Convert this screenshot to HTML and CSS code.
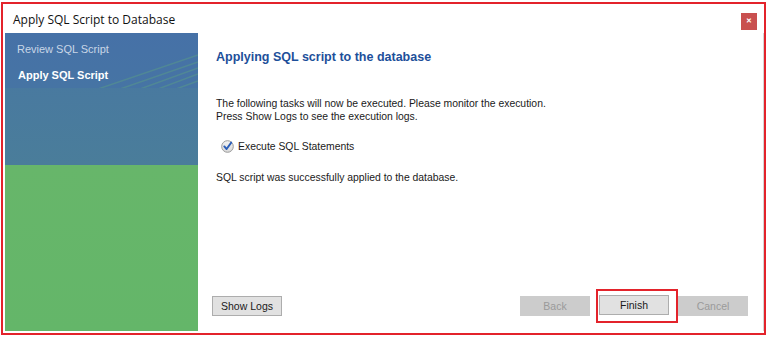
FILE: index.html
```html
<!DOCTYPE html>
<html>
<head>
<meta charset="utf-8">
<link rel="stylesheet" href="styles.css">
</head>
<body>
<div class="frame">
  <div class="titlebar">
    <span class="title">Apply SQL Script to Database</span>
    <span class="close">&#x2715;</span>
  </div>
  <div class="main">
    <aside class="sidebar">
      <div class="nav">
        <div class="nav-head">
          <svg class="deco" width="100" height="36" viewBox="0 0 100 36">
            <g stroke="#5a9c88" stroke-width="1.5" fill="none" opacity="0.5">
              <path d="M0 36 L100 2"/>
              <path d="M22 36 L100 9"/>
              <path d="M42 36 L100 15"/>
              <path d="M60 36 L100 21"/>
              <path d="M78 36 L100 28"/>
            </g>
          </svg>
          <div class="step">Review SQL Script</div>
          <div class="step active">Apply SQL Script</div>
        </div>
      </div>
      <div class="green"></div>
    </aside>
    <section class="content">
      <h1 class="heading">Applying SQL script to the database</h1>
      <p class="info">The following tasks will now be executed. Please monitor the execution.<br>Press Show Logs to see the execution logs.</p>
      <div class="task">
        <svg class="check" width="13" height="13" viewBox="0 0 13 13">
          <defs>
            <linearGradient id="cb" x1="0" y1="0" x2="0" y2="1">
              <stop offset="0" stop-color="#f4f4f4"/>
              <stop offset="1" stop-color="#d8d8d8"/>
            </linearGradient>
          </defs>
          <circle cx="6.5" cy="6.5" r="5.8" fill="url(#cb)" stroke="#9a9a9a" stroke-width="1"/>
          <path d="M3.3 6.4 L5.6 9 L10.2 2.6" stroke="#2a5db8" stroke-width="1.9" fill="none" stroke-linecap="round" stroke-linejoin="round"/>
        </svg>
        <span>Execute SQL Statements</span>
      </div>
      <p class="info success">SQL script was successfully applied to the database.</p>
      <div class="footer">
        <button class="btn">Show Logs</button>
        <div class="spacer"></div>
        <button class="btn disabled back">Back</button>
        <div class="highlight"><button class="btn">Finish</button></div>
        <button class="btn disabled">Cancel</button>
      </div>
    </section>
  </div>
</div>
</body>
</html>
```
FILE: styles.css
```css
html, body {
  margin: 0;
  padding: 0;
  background: #ffffff;
}
body {
  font-family: "Liberation Sans", Arial, sans-serif;
  font-size: 11px;
  color: #1a1a1a;
}
.frame {
  box-sizing: border-box;
  margin: 2px 0 0 1px;
  width: 765px;
  height: 333px;
  border: 2px solid #e3232b;
  display: flex;
  flex-direction: column;
  background: #fff;
}
.titlebar {
  height: 29px;
  flex: none;
  display: flex;
  align-items: center;
  justify-content: space-between;
  padding: 0 7px 0 10px;
}
.title {
  font-family: "Open Sans", "Noto Sans", sans-serif;
  font-size: 12px;
  color: #111;
  margin-top: 2px;
}
.close {
  width: 16px;
  height: 17px;
  background: #c9504f;
  color: #fff;
  font-size: 7px;
  font-weight: bold;
  display: flex;
  align-items: center;
  justify-content: center;
  margin-top: 5px;
}
.main {
  flex: 1;
  display: flex;
  padding: 0 0 2px 2px;
  min-height: 0;
}
.sidebar {
  width: 193px;
  flex: none;
  display: flex;
  flex-direction: column;
}
.nav {
  height: 132px;
  flex: none;
  background: linear-gradient(180deg, #4877a3 0%, #4a7d9a 100%);
}
.nav-head {
  position: relative;
  height: 55px;
  box-sizing: border-box;
  padding-top: 9px;
  background: linear-gradient(180deg, #4671a7 0%, #4674a4 100%);
  overflow: hidden;
}
.deco {
  position: absolute;
  right: 0;
  top: 20px;
}
.step {
  position: relative;
  padding-left: 12px;
  height: 26px;
  line-height: 14px;
  color: #c9d6e6;
  font-size: 11px;
}
.step.active {
  color: #ffffff;
  font-weight: bold;
  padding-left: 13px;
}
.green {
  flex: 1;
  background: linear-gradient(180deg, #67b66a 0%, #64b669 100%);
}
.content {
  flex: 1;
  display: flex;
  flex-direction: column;
  border-right: 1px solid #d4d4d4;
  padding-left: 18px;
}
.heading {
  margin: 16px 0 0 0;
  font-size: 12.5px;
  font-weight: bold;
  color: #1d4f9a;
  line-height: 16px;
}
.info {
  margin: 32px 0 0 0;
  line-height: 13px;
  font-size: 10.4px;
}
.task {
  display: flex;
  align-items: center;
  gap: 4px;
  margin: 17px 0 0 5px;
  font-size: 10.4px;
}
.check {
  flex: none;
}
.success {
  margin-top: 18px;
}
.footer {
  margin-top: auto;
  display: flex;
  align-items: flex-start;
  padding: 0 15px 8px 0;
  margin-left: -4px;
}
.spacer {
  flex: 1;
}
.btn {
  box-sizing: border-box;
  width: 70px;
  height: 20px;
  margin-top: 7px;
  background: #e1e1e1;
  border: 1px solid #adadad;
  font-family: "Liberation Sans", Arial, sans-serif;
  font-size: 10.5px;
  color: #1a1a1a;
  padding: 0;
}
.btn.disabled {
  background: #cccccc;
  border-color: #cccccc;
  color: #9a9a9a;
}
.back {
  margin-right: 6px;
}
.highlight {
  border: 2px solid #e3232b;
  padding: 4px 7px 6px 1px;
}
.highlight .btn {
  margin-top: 0;
}
```
